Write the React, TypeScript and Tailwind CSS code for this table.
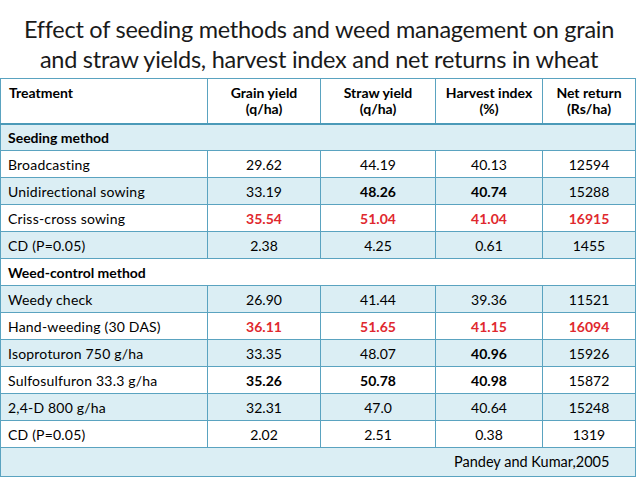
import React from 'react';

type Cell = { v: string; s?: 'b' | 'r' };
type Row = { label: string; cells?: Cell[]; group?: boolean };

const ROWS: Row[] = [
  { label: 'Seeding method', group: true },
  { label: 'Broadcasting', cells: [{ v: '29.62' }, { v: '44.19' }, { v: '40.13' }, { v: '12594' }] },
  { label: 'Unidirectional sowing', cells: [{ v: '33.19' }, { v: '48.26', s: 'b' }, { v: '40.74', s: 'b' }, { v: '15288' }] },
  { label: 'Criss-cross sowing', cells: [{ v: '35.54', s: 'r' }, { v: '51.04', s: 'r' }, { v: '41.04', s: 'r' }, { v: '16915', s: 'r' }] },
  { label: 'CD (P=0.05)', cells: [{ v: '2.38' }, { v: '4.25' }, { v: '0.61' }, { v: '1455' }] },
  { label: 'Weed-control method', group: true },
  { label: 'Weedy check', cells: [{ v: '26.90' }, { v: '41.44' }, { v: '39.36' }, { v: '11521' }] },
  { label: 'Hand-weeding (30 DAS)', cells: [{ v: '36.11', s: 'r' }, { v: '51.65', s: 'r' }, { v: '41.15', s: 'r' }, { v: '16094', s: 'r' }] },
  { label: 'Isoproturon 750 g/ha', cells: [{ v: '33.35' }, { v: '48.07' }, { v: '40.96', s: 'b' }, { v: '15926' }] },
  { label: 'Sulfosulfuron 33.3 g/ha', cells: [{ v: '35.26', s: 'b' }, { v: '50.78', s: 'b' }, { v: '40.98', s: 'b' }, { v: '15872' }] },
  { label: '2,4-D 800 g/ha', cells: [{ v: '32.31' }, { v: '47.0' }, { v: '40.64' }, { v: '15248' }] },
  { label: 'CD (P=0.05)', cells: [{ v: '2.02' }, { v: '2.51' }, { v: '0.38' }, { v: '1319' }] },
];

const App: React.FC = () => {
  return (
    <div
      className="w-[638px] h-[479px] bg-white text-black overflow-hidden"
      style={{ fontFamily: 'Lato, "Open Sans", sans-serif' }}
    >
      {/* Title */}
      <h1 className="h-[78px] pt-[14px] text-center text-[23.5px] leading-[30px] font-normal tracking-[-0.25px] text-[#1a1a1a]">
        Effect of seeding methods and weed management on grain
        <br />
        and straw yields, harvest index and net returns in wheat
      </h1>

      {/* Table */}
      <table className="w-[635px] table-fixed border-collapse text-[14px]">
        <colgroup>
          <col className="w-[207px]" />
          <col className="w-[113px]" />
          <col className="w-[115px]" />
          <col className="w-[107px]" />
          <col className="w-[93px]" />
        </colgroup>
        <thead>
          <tr className="h-[45px] bg-white text-[14px] font-bold leading-[16px]">
            <th className="border border-[#5aa3c0] border-b-2 border-b-[#4b9ab8] align-top pt-[6px] pl-[8px] text-left font-bold">Treatment</th>
            <th className="border border-[#5aa3c0] border-b-2 border-b-[#4b9ab8] align-top pt-[6px] text-center font-bold">Grain yield<br />(q/ha)</th>
            <th className="border border-[#5aa3c0] border-b-2 border-b-[#4b9ab8] align-top pt-[6px] text-center font-bold">Straw yield<br />(q/ha)</th>
            <th className="border border-[#5aa3c0] border-b-2 border-b-[#4b9ab8] align-top pt-[6px] text-center font-bold">Harvest index<br />(%)</th>
            <th className="border border-[#5aa3c0] border-b-2 border-b-[#4b9ab8] align-top pt-[6px] text-center font-bold">Net return<br />(Rs/ha)</th>
          </tr>
        </thead>
        <tbody>
          {ROWS.map((row, i) => {
            const bg = i % 2 === 0 ? 'bg-[#dbeef4]' : 'bg-white';
            if (row.group) {
              return (
                <tr key={i} className={`h-[27px] ${bg}`}>
                  <td colSpan={5} className="border border-[#5aa3c0] pl-[7px] font-bold">
                    {row.label}
                  </td>
                </tr>
              );
            }
            return (
              <tr key={i} className={`h-[27px] ${bg}`}>
                <td className="border border-[#5aa3c0] pl-[7px] tracking-[0.2px]">{row.label}</td>
                {row.cells!.map((c, j) => (
                  <td
                    key={j}
                    className={`border border-[#5aa3c0] text-center ${
                      c.s === 'r' ? 'font-bold text-[#e0282e]' : c.s === 'b' ? 'font-bold' : ''
                    }`}
                  >
                    {c.v}
                  </td>
                ))}
              </tr>
            );
          })}
          <tr className="h-[29px] bg-[#dbeef4]">
            <td colSpan={5} className="border border-[#5aa3c0] pl-[453px] text-[14.5px]">
              Pandey and Kumar,2005
            </td>
          </tr>
        </tbody>
      </table>
    </div>
  );
};

export default App;
